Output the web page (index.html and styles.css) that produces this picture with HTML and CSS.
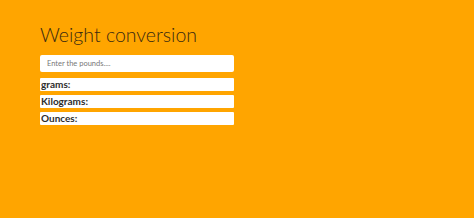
FILE: index.html
```html
<!DOCTYPE html>
<html>
<head>
<meta charset="utf-8">
<link rel="stylesheet" href="styles.css">
</head>
<body>
<div class="page">
  <h1 class="title">Weight conversion</h1>
  <input class="pounds" type="text" placeholder="Enter the pounds....">
  <div class="result">grams:</div>
  <div class="result">Kilograms:</div>
  <div class="result">Ounces:</div>
</div>
</body>
</html>
```
FILE: styles.css
```css
html, body {
  margin: 0;
  padding: 0;
  background: #ffa500;
}
body {
  font-family: "Lato", "Open Sans", "Liberation Sans", sans-serif;
  color: #333;
}
.page {
  padding: 22px 0 0 40px;
  width: 194px;
  display: flex;
  flex-direction: column;
}
.title {
  margin: 0 0 7px 0;
  font-size: 19.5px;
  font-weight: 300;
  line-height: 26px;
  color: #3a2a10;
  white-space: nowrap;
}
.pounds {
  box-sizing: border-box;
  height: 17px;
  margin: 0 0 6px 0;
  padding: 0 7px;
  border: none;
  border-radius: 2px;
  background: #fff;
  font-family: inherit;
  font-size: 7.5px;
  color: #333;
}
.pounds::placeholder {
  color: #777;
}
.result {
  box-sizing: border-box;
  height: 13px;
  margin-bottom: 4px;
  padding-left: 1px;
  background: #fff;
  border-radius: 1px;
  font-size: 10px;
  font-weight: 700;
  line-height: 13px;
  color: #2d2d2d;
}
```
